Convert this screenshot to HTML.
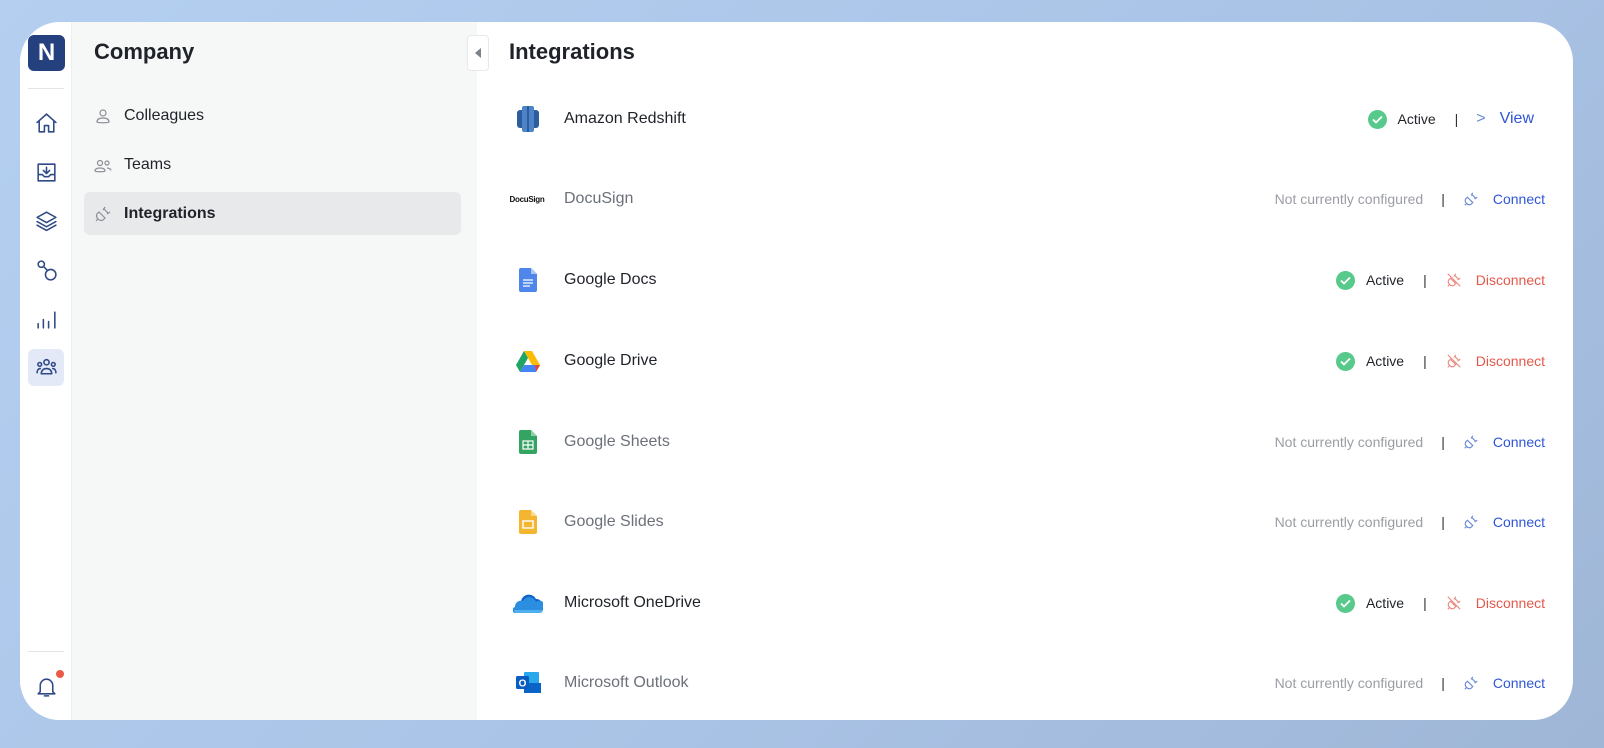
<!DOCTYPE html>
<html><head><meta charset="utf-8"><style>
*{box-sizing:border-box;margin:0;padding:0}
body{width:1604px;height:748px;overflow:hidden;background:linear-gradient(135deg,#b4cff0,#a9c3e6 60%,#9fb6d6);font-family:"Liberation Sans",sans-serif;position:relative}
.card{position:absolute;left:20px;top:22px;width:1553px;height:698px;background:#fff;border-radius:40px;overflow:hidden}
.rail{position:absolute;left:0;top:0;width:52px;height:100%;background:#fff;border-right:1px solid #eceef0}
.side{position:absolute;left:52px;top:0;width:405px;height:100%;background:#f6f7f7}
.logo{position:absolute;left:8px;top:13px;width:37px;height:36px;background:#24407f;border-radius:6px;color:#fff;font-weight:bold;font-size:24px;text-align:center;line-height:36px}
.sep{position:absolute;left:8px;width:36px;height:1px;background:#e3e5e8}
.ri{position:absolute;left:8px;width:36px;height:36px;display:flex;align-items:center;justify-content:center}
.ri svg{width:25px;height:25px;fill:none;stroke:#2f4a86;stroke-width:1.5;stroke-linecap:round;stroke-linejoin:round}
h1{position:absolute;font-size:22px;font-weight:bold;color:#1f2329}
.si{position:absolute;left:12px;width:377px;height:43px;display:flex;align-items:center;font-size:16px;color:#1f2329;border-radius:6px}
.si svg{width:18px;height:18px;margin-left:10px;margin-right:12px;fill:none;stroke:#8a8f96;stroke-width:1.2}
.row{position:absolute;left:457px;width:1096px;height:40px;display:flex;align-items:center}
.ic{position:absolute;left:36px;width:30px;height:30px;display:flex;align-items:center;justify-content:center}
.nm{position:absolute;left:87px;font-size:16px;color:#1f2329}
.nm.g{color:#6b7079}
.st{position:absolute;right:28px;display:flex;align-items:center;font-size:14px;color:#1f2329}
.nc{color:#9a9ea4}
.bar{margin:0 18px;color:#333}
.cta{color:#2f56d6}
.dis{color:#e4584a}
.chk{width:19px;height:19px;border-radius:50%;background:#57c98a;display:flex;align-items:center;justify-content:center;margin-right:11px}
</style></head><body>
<div class="card">
<div class="rail">
<div class="logo">N</div>
<div class="sep" style="top:66px"></div>
<div class="ri" style="top:83px"><svg viewBox="0 0 24 24"><path d="M3 11L12 3l9 8M5 9.5V20h5v-6h4v6h5V9.5"/></svg></div>
<div class="ri" style="top:132px"><svg viewBox="0 0 24 24"><path d="M4 4h16v16H4zM4 14h4l2 2h4l2-2h4M12 7v6M9 10l3 3 3-3"/></svg></div>
<div class="ri" style="top:180px"><svg viewBox="0 0 24 24"><path d="M12 4l9 5-9 5-9-5zM3 13l9 5 9-5M3 16.5l9 5 9-5"/></svg></div>
<div class="ri" style="top:230px"><svg viewBox="0 0 24 24"><circle cx="7" cy="6" r="3"/><circle cx="16" cy="16" r="5"/><path d="M9 8l4 4"/></svg></div>
<div class="ri" style="top:279px"><svg viewBox="0 0 24 24"><path d="M4 20v-4M9 20v-8M14 20v-6M20 20V5"/></svg></div>
<div class="ri" style="top:327px;background:#e3e9f6;border-radius:6px;height:37px"><svg viewBox="0 0 24 24"><circle cx="12" cy="7" r="2.5"/><circle cx="5.5" cy="9" r="1.8"/><circle cx="18.5" cy="9" r="1.8"/><path d="M7 18c0-3 2-5 5-5s5 2 5 5zM3 17c0-2 1-4 3-4M21 17c0-2-1-4-3-4"/></svg></div>
<div class="sep" style="top:629px"></div>
<div class="ri" style="top:646px"><svg viewBox="0 0 24 24"><path d="M6 17V11a6 6 0 0112 0v6l2 2H4zM10 21h4"/></svg></div>
<div style="position:absolute;left:36px;top:648px;width:8px;height:8px;border-radius:50%;background:#ea5a47"></div>
</div>
<div class="side">
<h1 style="left:22px;top:17px">Company</h1>
<div class="si" style="top:72px"><svg viewBox="0 0 18 18"><circle cx="9" cy="6" r="3"/><path d="M3 15c0-3 3-4 6-4s6 1 6 4c0 1-12 1-12 0z"/></svg>Colleagues</div>
<div class="si" style="top:121px"><svg viewBox="0 0 18 18"><circle cx="6" cy="7" r="2.5"/><circle cx="13" cy="7" r="2"/><path d="M1 15c0-2 2-3 5-3s5 1 5 3c0 1-10 1-10 0zM13 12c2 0 4 1 4 2.5"/></svg>Teams</div>
<div class="si" style="top:170px;background:#e8e9eb;font-weight:bold"><svg viewBox="0 0 18 18"><path d="M5 7l6 6-2 2c-2 1-4 0-5-1s-2-3-1-5zM4 14l-2 2M9 5l2-3M13 9l3-2M10 4l4 4"/></svg>Integrations</div>
</div>
<div style="position:absolute;left:447px;top:13px;width:22px;height:36px;background:#fff;border:1px solid #e6e8ea;border-radius:4px"><div style="position:absolute;left:7px;top:12px;border-right:6px solid #7d8288;border-top:5px solid transparent;border-bottom:5px solid transparent"></div></div>
<h1 style="left:489px;top:17px">Integrations</h1>

<div class="row" style="top:77px"><div class="ic"><svg width="26" height="30" viewBox="0 0 26 30"><rect x="2" y="6" width="22" height="18" rx="3" fill="#2e5d9f"/><rect x="7" y="2" width="12" height="26" rx="2" fill="#4c84c7"/><rect x="12" y="2" width="2" height="26" fill="#2e5d9f"/></svg></div><div class="nm">Amazon Redshift</div>
<div class="st" style="right:39px"><div class="chk"><svg width="11" height="9" viewBox="0 0 11 9"><path d="M1 4.5l3 3 6-6" stroke="#fff" stroke-width="1.8" fill="none"/></svg></div>Active<span class="bar" style="margin:0 18px 0 19px">|</span><span style="color:#6c8ad9;margin-right:14px;font-size:16px">&gt;</span><span class="cta" style="font-size:16px">View</span></div></div>

<div class="row" style="top:157px"><div class="ic" style="left:30px;width:40px;font-size:8px;font-weight:bold;color:#111;letter-spacing:-.3px">DocuSign</div><div class="nm g">DocuSign</div>
<div class="st"><span class="nc">Not currently configured</span><span class="bar">|</span><svg width="16" height="16" viewBox="0 0 18 18" style="margin-right:14px;fill:none;stroke:#6c8ad9;stroke-width:1.3"><path d="M5 7l6 6-2 2c-2 1-4 0-5-1s-2-3-1-5zM4 14l-2 2M9 5l2-3M13 9l3-2M10 4l4 4"/></svg><span class="cta">Connect</span></div></div>

<div class="row" style="top:238px"><div class="ic"><svg width="18" height="24" viewBox="0 0 18 24"><path d="M2 0h10l6 6v16a2 2 0 01-2 2H2a2 2 0 01-2-2V2a2 2 0 012-2z" fill="#4e86ec"/><path d="M12 0v6h6z" fill="#a9c4f5"/><path d="M4 12h10M4 15h10M4 18h7" stroke="#fff" stroke-width="1.2"/></svg></div><div class="nm">Google Docs</div>
<div class="st"><div class="chk"><svg width="11" height="9" viewBox="0 0 11 9"><path d="M1 4.5l3 3 6-6" stroke="#fff" stroke-width="1.8" fill="none"/></svg></div>Active<span class="bar" style="margin:0 19px">|</span><svg width="16" height="16" viewBox="0 0 18 18" style="margin-right:14px;fill:none;stroke:#eb8a80;stroke-width:1.3"><path d="M5 7l6 6-2 2c-2 1-4 0-5-1s-2-3-1-5zM4 14l-2 2M9 5l2-3M13 9l3-2M10 4l4 4M2 2l14 14"/></svg><span class="dis">Disconnect</span></div></div>

<div class="row" style="top:319px"><div class="ic"><svg width="24" height="22" viewBox="0 0 24 22"><path d="M8 1h8l8 14h-8z" fill="#fbbc04"/><path d="M8 1l4 7-8 14-4-7z" fill="#1fa463"/><path d="M4 22l4-7h16l-4 7z" fill="#4285f4"/><path d="M20 22l4-7h-5z" fill="#ea4335"/></svg></div><div class="nm">Google Drive</div>
<div class="st"><div class="chk"><svg width="11" height="9" viewBox="0 0 11 9"><path d="M1 4.5l3 3 6-6" stroke="#fff" stroke-width="1.8" fill="none"/></svg></div>Active<span class="bar" style="margin:0 19px">|</span><svg width="16" height="16" viewBox="0 0 18 18" style="margin-right:14px;fill:none;stroke:#eb8a80;stroke-width:1.3"><path d="M5 7l6 6-2 2c-2 1-4 0-5-1s-2-3-1-5zM4 14l-2 2M9 5l2-3M13 9l3-2M10 4l4 4M2 2l14 14"/></svg><span class="dis">Disconnect</span></div></div>

<div class="row" style="top:400px"><div class="ic"><svg width="18" height="24" viewBox="0 0 18 24"><path d="M2 0h10l6 6v16a2 2 0 01-2 2H2a2 2 0 01-2-2V2a2 2 0 012-2z" fill="#34a463"/><path d="M12 0v6h6z" fill="#8ed1a8"/><rect x="4" y="11" width="10" height="8" fill="none" stroke="#fff" stroke-width="1.2"/><path d="M4 15h10M9 11v8" stroke="#fff" stroke-width="1.2"/></svg></div><div class="nm g">Google Sheets</div>
<div class="st"><span class="nc">Not currently configured</span><span class="bar">|</span><svg width="16" height="16" viewBox="0 0 18 18" style="margin-right:14px;fill:none;stroke:#6c8ad9;stroke-width:1.3"><path d="M5 7l6 6-2 2c-2 1-4 0-5-1s-2-3-1-5zM4 14l-2 2M9 5l2-3M13 9l3-2M10 4l4 4"/></svg><span class="cta">Connect</span></div></div>

<div class="row" style="top:480px"><div class="ic"><svg width="18" height="24" viewBox="0 0 18 24"><path d="M2 0h10l6 6v16a2 2 0 01-2 2H2a2 2 0 01-2-2V2a2 2 0 012-2z" fill="#f4b631"/><path d="M12 0v6h6z" fill="#f8d98b"/><rect x="4" y="11" width="10" height="7" fill="none" stroke="#fff" stroke-width="1.4"/></svg></div><div class="nm g">Google Slides</div>
<div class="st"><span class="nc">Not currently configured</span><span class="bar">|</span><svg width="16" height="16" viewBox="0 0 18 18" style="margin-right:14px;fill:none;stroke:#6c8ad9;stroke-width:1.3"><path d="M5 7l6 6-2 2c-2 1-4 0-5-1s-2-3-1-5zM4 14l-2 2M9 5l2-3M13 9l3-2M10 4l4 4"/></svg><span class="cta">Connect</span></div></div>

<div class="row" style="top:561px"><div class="ic"><svg width="30" height="20" viewBox="0 0 30 20"><path d="M8 8a8 8 0 0115-2 6 6 0 016 8H12z" fill="#0f64c8"/><path d="M3 20a3 3 0 01-1-6 6 6 0 018-6 7 7 0 0113 1 5 5 0 017 8 4 4 0 01-3 3z" fill="#2b8ee0"/><path d="M3 20h24a4 4 0 003-3H1a3 3 0 002 3z" fill="#4fb0f0"/></svg></div><div class="nm">Microsoft OneDrive</div>
<div class="st"><div class="chk"><svg width="11" height="9" viewBox="0 0 11 9"><path d="M1 4.5l3 3 6-6" stroke="#fff" stroke-width="1.8" fill="none"/></svg></div>Active<span class="bar" style="margin:0 19px">|</span><svg width="16" height="16" viewBox="0 0 18 18" style="margin-right:14px;fill:none;stroke:#eb8a80;stroke-width:1.3"><path d="M5 7l6 6-2 2c-2 1-4 0-5-1s-2-3-1-5zM4 14l-2 2M9 5l2-3M13 9l3-2M10 4l4 4M2 2l14 14"/></svg><span class="dis">Disconnect</span></div></div>

<div class="row" style="top:641px"><div class="ic"><svg width="26" height="24" viewBox="0 0 26 24"><rect x="9" y="1" width="15" height="20" rx="1" fill="#28a8ea"/><path d="M9 12h17v10H9z" fill="#0a64c8"/><rect x="1" y="5" width="13" height="13" rx="1.5" fill="#0a5cbe"/><text x="7.5" y="15.5" font-size="10" font-weight="bold" fill="#fff" text-anchor="middle" font-family="Liberation Sans">O</text></svg></div><div class="nm g">Microsoft Outlook</div>
<div class="st"><span class="nc">Not currently configured</span><span class="bar">|</span><svg width="16" height="16" viewBox="0 0 18 18" style="margin-right:14px;fill:none;stroke:#6c8ad9;stroke-width:1.3"><path d="M5 7l6 6-2 2c-2 1-4 0-5-1s-2-3-1-5zM4 14l-2 2M9 5l2-3M13 9l3-2M10 4l4 4"/></svg><span class="cta">Connect</span></div></div>
</div>
</body></html>
